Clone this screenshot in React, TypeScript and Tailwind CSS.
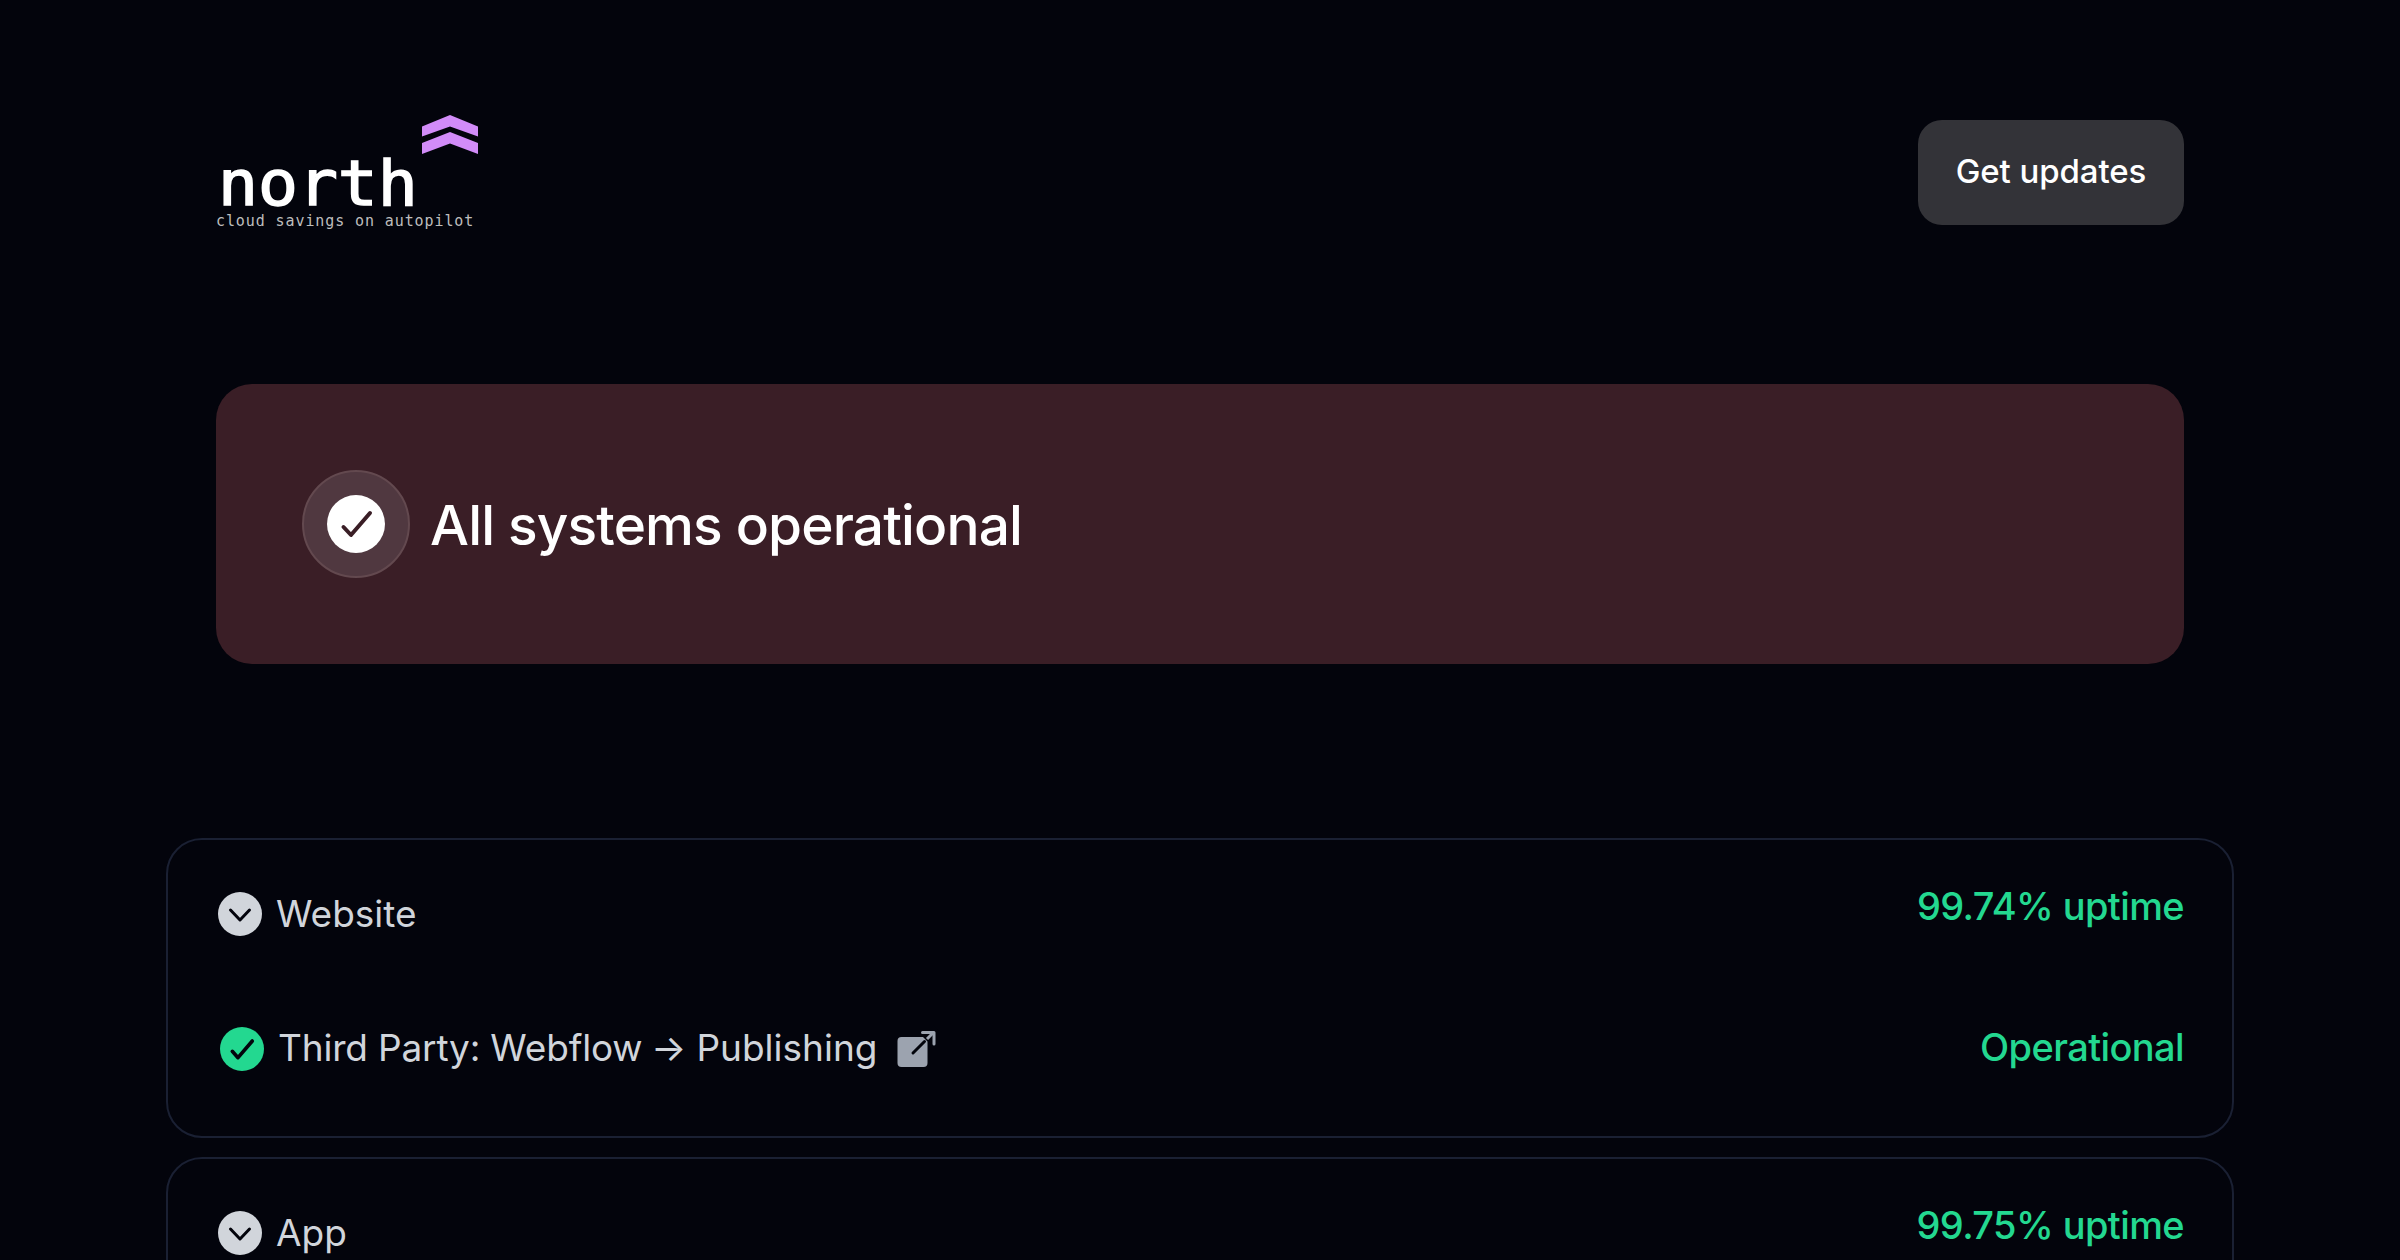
import React from "react";

const Chevron = () => (
  <div className="flex h-[44px] w-[44px] shrink-0 items-center justify-center rounded-full bg-[#d1d5db]">
    <svg width="24" height="24" viewBox="0 0 24 24" fill="none" stroke="#03040c" strokeWidth="3" strokeLinecap="round" strokeLinejoin="round">
      <path d="M2.5 8l9.5 10L21.5 8" />
    </svg>
  </div>
);

function Card({ children, className }: { children: React.ReactNode; className: string }) {
  return <div className={`rounded-[36px] border-2 border-[#1a2033] px-[48px] ${className}`}>{children}</div>;
}

function Row({ label, uptime }: { label: string; uptime: string }) {
  return (
    <div className="flex items-start justify-between pt-[52px]">
      <div className="ml-[2px] flex items-center gap-[14px]">
        <Chevron />
        <span className="text-[37px] leading-[44px] text-[#d1d5db]">{label}</span>
      </div>
      <span className="-mt-[8px] text-[38px] font-[450] leading-[44px] tracking-[-0.6px] text-[#23d890]">{uptime}</span>
    </div>
  );
}

export default function App() {
  return (
    <div className="h-[1260px] overflow-hidden bg-[#03040c] font-['Inter',sans-serif] text-white">
      <div className="mx-auto w-[2068px] pt-[120px]">
        <header className="mx-[50px] flex h-[105px] items-start justify-between">
          <div className="relative h-[105px] w-[262px]">
            <div className="absolute left-[2px] top-[39px] origin-left scale-x-[1.07] font-['DejaVu_Sans_Mono',monospace] text-[62px] leading-[50px] [-webkit-text-stroke:1.5px_white]">north</div>
            <div className="absolute left-0 top-[92px] whitespace-nowrap font-['DejaVu_Sans_Mono',monospace] text-[15px] leading-[18px] tracking-[0.9px] text-[#bdbdbd]">cloud savings on autopilot</div>
            <svg className="absolute left-[206px] top-[-5px]" width="56" height="40" viewBox="0 0 56 40" fill="#d28cf8">
              <path d="M0 11.6L28 0L56 11.6V21.6L28 11.6L0 21.6Z" />
              <path d="M0 28L28 17L56 28V39L28 28.5L0 39Z" />
            </svg>
          </div>
          <button className="flex h-[105px] w-[266px] items-center justify-center rounded-[24px] bg-[#333338] pb-[2px] text-[33px] font-[450] tracking-[-0.1px] text-white">Get updates</button>
        </header>

        <section className="mx-[50px] mt-[159px] flex h-[280px] items-center gap-[20px] rounded-[36px] bg-[#3a1e26] px-[86px]">
          <div className="flex h-[108px] w-[108px] items-center justify-center rounded-full border-2 border-[#63494f] bg-[#503840]">
            <div className="flex h-[58px] w-[58px] items-center justify-center rounded-full bg-white">
              <svg width="34" height="34" viewBox="0 0 34 34" fill="none" stroke="#3a1e26" strokeWidth="4" strokeLinecap="round" strokeLinejoin="round">
                <path d="M4.5 20L12 28L31 6" />
              </svg>
            </div>
          </div>
          <div className="pt-[2px] text-[55px] font-medium leading-none tracking-[-0.85px]">All systems operational</div>
        </section>

        <Card className="mt-[174px] h-[300px]">
          <Row label="Website" uptime="99.74% uptime" />
          <div className="mt-[88px] flex items-center justify-between">
            <div className="flex items-center">
              <div className="ml-[4px] flex h-[44px] w-[44px] items-center justify-center rounded-full bg-[#23d890]">
                <svg width="28" height="28" viewBox="0 0 28 28" fill="none" stroke="#03040c" strokeWidth="3.6" strokeLinecap="round" strokeLinejoin="round">
                  <path d="M4.3 16.3L10 22.7L24.3 6" />
                </svg>
              </div>
              <span className="ml-[14px] pb-[3px] text-[37px] leading-[44px] tracking-[-0.18px] text-[#d1d5db]">
                Third Party: Webflow <span className="-ml-[1.5px]">→</span> <span className="tracking-[0px]">Publishing</span>
              </span>
              <svg className="ml-[13px]" width="50" height="50" viewBox="0 0 50 50" fill="none">
                <rect x="7.5" y="13" width="30" height="30" rx="4" fill="#9ca3af" />
                <path d="M35 15L46 4" stroke="#03040c" strokeWidth="7" />
                <path d="M37 15L44 8" stroke="#9ca3af" strokeWidth="3" />
                <path d="M32.5 8.5H44V20" stroke="#9ca3af" strokeWidth="3" strokeLinecap="round" strokeLinejoin="round" />
                <path d="M23 29L34.5 17.5" stroke="#03040c" strokeWidth="3" strokeLinecap="round" />
              </svg>
            </div>
            <span className="pb-[4px] text-[38px] font-[450] leading-[44px] tracking-[-0.6px] text-[#23d890]">Operational</span>
          </div>
        </Card>

        <Card className="mt-[19px] h-[300px]">
          <Row label="App" uptime="99.75% uptime" />
        </Card>
      </div>
    </div>
  );
}
